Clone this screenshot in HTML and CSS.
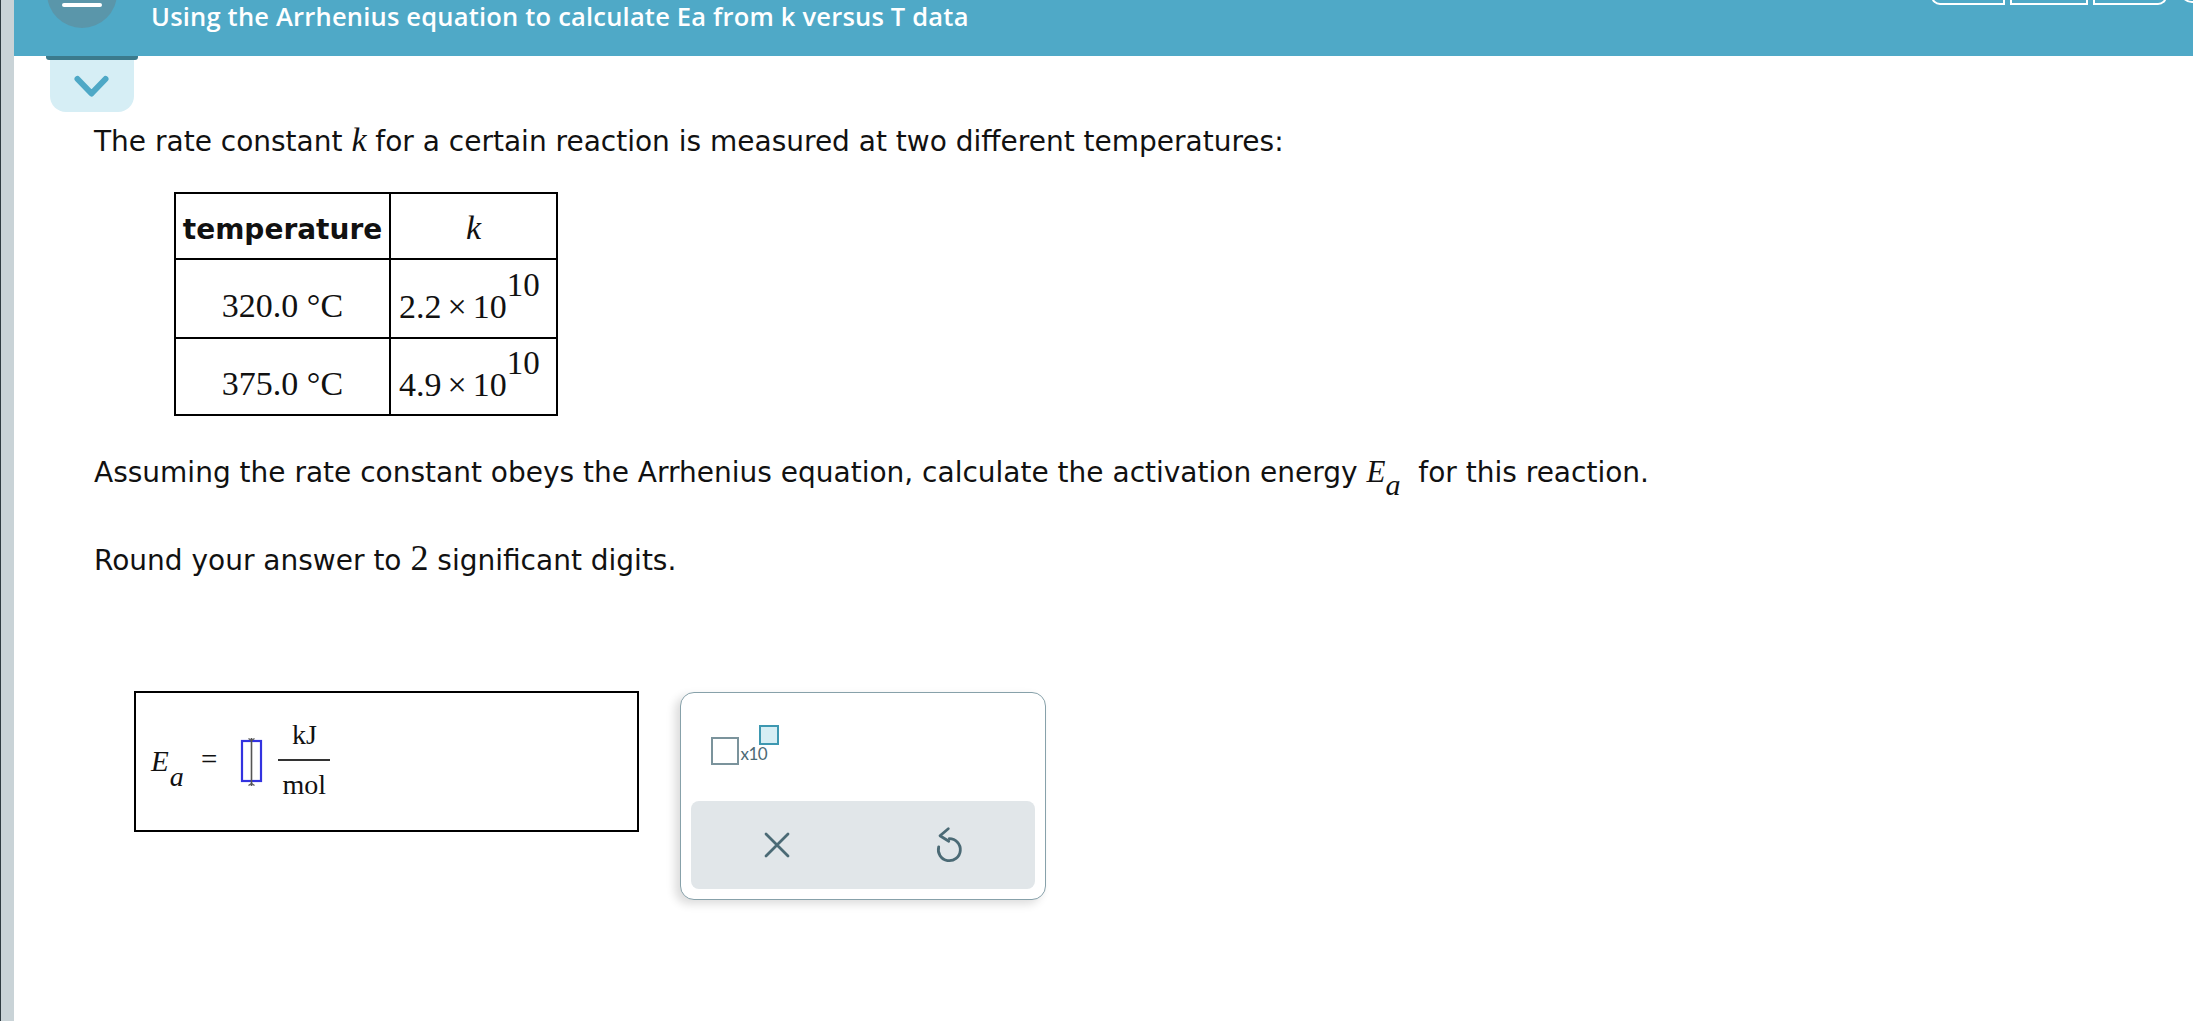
FILE: index.html
```html
<!DOCTYPE html>
<html lang="en">
<head>
<meta charset="utf-8">
<title>Arrhenius</title>
<link rel="stylesheet" href="styles.css">
</head>
<body>
<div class="page">
  <div class="rail"></div>
  <div class="main">
    <header class="topbar">
      <div class="menu-btn"><span class="menu-line"></span></div>
      <h1 class="title">Using the Arrhenius equation to calculate Ea from k versus T data</h1>
      <div class="top-tabs"><span class="ttab first"></span><span class="ttab"></span><span class="ttab last"></span></div>
      <span class="top-circle"></span>
    </header>
    <div class="collapse">
      <div class="lip"></div>
      <div class="tab">
        <svg width="36" height="24" viewBox="0 0 36 24"><polyline points="3.5,4 17.5,18.5 31.5,4" fill="none" stroke="#4ea8c6" stroke-width="6" stroke-linecap="round" stroke-linejoin="round"/></svg>
      </div>
    </div>
    <div class="content">
      <p class="p1">The rate constant <i class="mk">k</i> for a certain reaction is measured at two different temperatures:</p>
      <table class="data">
        <tr class="hrow"><th class="c1">temperature</th><th class="c2"><i class="mk">k</i></th></tr>
        <tr class="r1"><td>320.0 °C</td><td class="val">2.2<span class="times">×</span>10<sup>10</sup></td></tr>
        <tr class="r2"><td>375.0 °C</td><td class="val">4.9<span class="times">×</span>10<sup>10</sup></td></tr>
      </table>
      <p class="p2">Assuming the rate constant obeys the Arrhenius equation, calculate the activation energy <span class="ea"><i>E</i><sub>a</sub></span> for this reaction.</p>
      <p class="p3">Round your answer to <span class="num">2</span> significant digits.</p>
      <div class="answer-row">
        <div class="answer-box">
          <span class="ans-e"><i>E</i><sub>a</sub></span>
          <span class="eq">=</span>
          <svg class="cursor" width="24" height="50" viewBox="0 0 24 50">
            <rect x="2" y="4" width="19" height="40" fill="none" stroke="#3333e0" stroke-width="2.2"/>
            <line x1="11.5" y1="1" x2="11.5" y2="49" stroke="#555" stroke-width="1.6"/>
            <path d="M8.5 1.5 L11.5 3.5 L14.5 1.5 M8.5 48.5 L11.5 46.5 L14.5 48.5" fill="none" stroke="#555" stroke-width="1.2"/>
          </svg>
          <span class="frac"><span class="num-t">kJ</span><span class="bar"></span><span class="den-t">mol</span></span>
        </div>
        <div class="tools">
          <div class="x10">
            <span class="sq"></span><span class="x10-t">x10</span><span class="sq-sup"></span>
          </div>
          <div class="btnbar">
            <div class="btn">
              <svg width="26" height="26" viewBox="0 0 26 26"><path d="M2 2 L24 24 M24 2 L2 24" stroke="#4b6a75" stroke-width="2.8" stroke-linecap="round"/></svg>
            </div>
            <div class="btn">
              <svg width="30" height="38" viewBox="0 0 30 38"><path d="M15.3 12.7 A11 11 0 1 1 4.7 20.9" fill="none" stroke="#4b6a75" stroke-width="2.8" stroke-linecap="round"/><path d="M14.3 2.7 L6 9.7 L14.8 15.3" fill="none" stroke="#4b6a75" stroke-width="2.8" stroke-linecap="round" stroke-linejoin="round"/></svg>
            </div>
          </div>
        </div>
      </div>
    </div>
  </div>
</div>
</body>
</html>
```

FILE: styles.css
```css
html, body {
  margin: 0;
  padding: 0;
  background: #fff;
}
.page {
  display: flex;
  width: 2193px;
  height: 1021px;
  overflow: hidden;
}
.rail {
  flex: 0 0 13px;
  background: #c9d3d7;
  border-left: 1px solid #2f3b41;
}
.main {
  flex: 1;
  min-width: 0;
  display: flex;
  flex-direction: column;
}
.topbar {
  height: 56px;
  flex: 0 0 56px;
  background: #4fa9c7;
  display: flex;
  align-items: flex-start;
}
.menu-btn {
  flex: 0 0 70px;
  width: 70px;
  height: 70px;
  margin: -42px 0 0 33px;
  border-radius: 50%;
  background: #5a96aa;
}
.menu-line {
  display: block;
  width: 40px;
  height: 4px;
  margin: 45px 0 0 15px;
  background: #fff;
  border-radius: 2px;
}
.title {
  margin: 2px 0 0 34px;
  font-family: "Open Sans", Lato, sans-serif;
  font-weight: 600;
  font-size: 25.5px;
  letter-spacing: 0.2px;
  line-height: 28px;
  color: #fff;
  white-space: nowrap;
}
.top-tabs {
  margin-left: auto;
  display: flex;
  gap: 5px;
  margin-top: -25px;
}
.ttab {
  display: block;
  width: 74px;
  height: 30px;
  border: 2px solid #fff;
  border-top: none;
  box-sizing: border-box;
}
.ttab:nth-child(2) { width: 78px; }
.ttab.first { border-bottom-left-radius: 9px; }
.ttab.last { border-bottom-right-radius: 9px; }
.top-circle {
  flex: 0 0 24px;
  width: 24px;
  height: 24px;
  box-sizing: border-box;
  border: 2px solid #fff;
  border-radius: 50%;
  margin: -21px -11px 0 13px;
}
.collapse {
  margin-left: 32px;
  width: 92px;
}
.lip {
  height: 4px;
  background: #3b7a8c;
  border-radius: 0 0 3px 3px;
}
.tab {
  width: 84px;
  height: 52px;
  margin-left: 4px;
  background: #d6eef5;
  border-radius: 0 0 16px 16px;
  display: flex;
  justify-content: center;
  padding-top: 15px;
  box-sizing: border-box;
}
.content {
  padding-left: 80px;
  font-family: "DejaVu Sans", Verdana, sans-serif;
  font-size: 28px;
  color: #111;
}
.content p {
  margin: 0;
  line-height: 40px;
  white-space: nowrap;
}
.mk {
  font-family: "Liberation Serif", serif;
  font-style: italic;
  font-weight: normal;
  font-size: 34px;
  line-height: 0;
}
.p1 { margin-top: 9.5px !important; }
.data {
  margin: 30.5px 0 0 80px;
  border-collapse: collapse;
}
.data th, .data td {
  border: 2px solid #000;
  padding: 0;
  text-align: center;
  vertical-align: middle;
}
.data .c1 { width: 213px; }
.data .c2 { width: 165px; }
.hrow th {
  height: 58px;
  padding-top: 6px;
}
.hrow .c1 {
  font-family: "DejaVu Sans", Verdana, sans-serif;
  font-weight: bold;
  font-size: 28px;
}
.r1 td { height: 63px; }
.r2 td { height: 61px; }
.r1 td, .r2 td {
  font-family: "Liberation Serif", serif;
  font-size: 34px;
  padding-top: 14px;
  line-height: 40px;
}
.data .val {
  text-align: left;
  padding-left: 8px;
}
.data .times { margin: 0 6px; }
.data sup {
  font-size: 33px;
  vertical-align: 22px;
  line-height: 0;
}
.p2 { margin-top: 36.5px !important; }
.ea {
  font-family: "Liberation Serif", serif;
  font-style: italic;
  font-size: 31px;
  line-height: 0;
}
.ea sub {
  font-size: 30px;
  vertical-align: -13px;
  line-height: 0;
  margin-right: 9px;
}
.p3 { margin-top: 48px !important; }
.num {
  font-family: "Liberation Serif", serif;
  font-size: 36px;
  line-height: 0;
}
.answer-row {
  display: flex;
  align-items: flex-start;
  margin: 110.5px 0 0 40px;
}
.answer-box {
  width: 505px;
  height: 141px;
  box-sizing: border-box;
  border: 2px solid #000;
  display: flex;
  align-items: center;
  padding-left: 15px;
  font-family: "Liberation Serif", serif;
  color: #111;
}
.ans-e {
  font-size: 29px;
  font-style: italic;
  line-height: 30px;
  width: 50px;
}
.ans-e sub {
  font-size: 28px;
  vertical-align: -15px;
  line-height: 0;
  margin-left: 1px;
}
.eq {
  font-size: 29px;
  line-height: 30px;
  margin-top: -6px;
}
.cursor {
  display: block;
  margin-left: 23px;
}
.frac {
  display: flex;
  flex-direction: column;
  align-items: center;
  width: 52px;
  margin-left: 14px;
  margin-bottom: 4px;
  font-size: 28px;
}
.num-t, .den-t {
  line-height: 30px;
}
.bar {
  display: block;
  width: 52px;
  height: 2px;
  background: #333;
  margin: 9px 0;
}
.tools {
  margin-left: 41px;
  margin-top: 1px;
  width: 366px;
  height: 208px;
  box-sizing: border-box;
  border: 1.5px solid #87a1aa;
  border-radius: 14px;
  box-shadow: -5px 4px 10px rgba(0, 0, 0, 0.14);
  display: flex;
  flex-direction: column;
  background: #fff;
}
.x10 {
  display: flex;
  align-items: flex-start;
  padding: 31.5px 0 0 29.5px;
}
.sq {
  display: block;
  width: 28px;
  height: 28px;
  box-sizing: border-box;
  border: 2.5px solid #7b939c;
  margin-top: 12px;
}
.x10-t {
  font-family: Lato, "Open Sans", sans-serif;
  font-size: 17px;
  line-height: 20px;
  color: #4d6a75;
  margin: 19.5px 0 0 2px;
  letter-spacing: -0.5px;
}
.sq-sup {
  display: block;
  width: 20px;
  height: 20px;
  box-sizing: border-box;
  border: 2.5px solid #3d98b1;
  background: #d6eef4;
  margin-left: -8px;
}
.btnbar {
  margin: auto 10px 10px 10px;
  height: 88px;
  background: #e1e6e9;
  border-radius: 8px;
  display: flex;
}
.btn {
  flex: 1;
  display: flex;
  align-items: center;
  justify-content: center;
}
```
